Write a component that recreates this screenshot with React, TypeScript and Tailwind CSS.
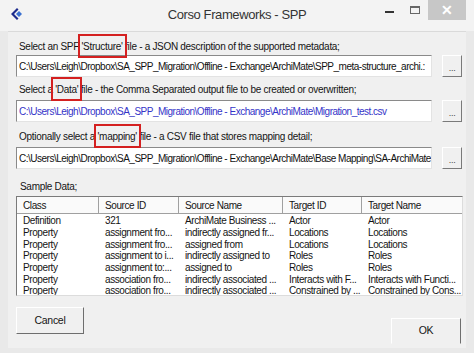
import React from 'react';

const rows = [
    ['Definition', '321', 'ArchiMate Business ...', 'Actor', 'Actor'],
    ['Property', 'assignment fro...', 'indirectly assigned fr...', 'Locations', 'Locations'],
    ['Property', 'assignment fro...', 'assigned from', 'Locations', 'Locations'],
    ['Property', 'assignment to i...', 'indirectly assigned to', 'Roles', 'Roles'],
    ['Property', 'assignment to:...', 'assigned to', 'Roles', 'Roles'],
    ['Property', 'association fro...', 'indirectly associated ...', 'Interacts with F...', 'Interacts with Functi...'],
    ['Property', 'association fro...', 'indirectly associated ...', 'Constrained by ...', 'Constrained by Cons...'],
];

const cols = ['Class', 'Source ID', 'Source Name', 'Target ID', 'Target Name'];
const widths = ['w-[82px]', 'w-[80px]', 'w-[104px]', 'w-[79px]', 'w-[101px]'];

function Marked({ children }: { children: React.ReactNode }) {
    return (
        <span className="relative inline-block">
            <span className="absolute -left-[4px] -right-[4px] -top-[5px] -bottom-[4px] border-2 border-[#d42020]" />
            {children}
        </span>
    );
}

function PathField({ value, blue }: { value: string; blue?: boolean }) {
    return (
        <div className="flex items-center gap-[10px]">
            <div className={`w-[421px] h-[22px] bg-white border border-t-[#8a8a8a] border-l-[#8a8a8a] border-r-[#e3e3e3] border-b-[#e3e3e3] flex items-center pl-[2px] overflow-hidden whitespace-nowrap tracking-[-0.5px] ${blue ? 'text-[#3434c8]' : 'text-[#111]'}`}>
                {value}
            </div>
            <div className="w-[20px] h-[22px] bg-[#f0f0f0] border border-t-white border-l-white border-r-[#7a7a7a] border-b-[#7a7a7a] text-[9px] leading-none text-[#444] pb-[3px] flex items-end justify-center">
                ...
            </div>
        </div>
    );
}

export default function App() {
    return (
        <div className="w-[474px] h-[353px] bg-[#e9e9e9] overflow-hidden flex flex-col text-[10px] tracking-[-0.3px] text-[#141414]" style={{ fontFamily: '"Liberation Sans", Arial, sans-serif' }}>
            {/* title bar */}
            <div className="h-[31px] relative flex items-center justify-center bg-[#f3f3f3]">
                <svg className="absolute left-[10px] top-[7px]" width="14" height="14" viewBox="0 0 14 14">
                    <path d="M7 1 L1 7 L7 13 L8.5 11.5 L4 7 L8.5 2.5 Z" fill="#1c2a8c" />
                    <path d="M6 7 L9 4 L12 7 L9 10 Z" fill="#3a70d0" />
                </svg>
                <span className="text-[13px] tracking-[-0.4px] text-[#333] pb-[2px]">Corso Frameworks - SPP</span>
                <div className="absolute right-[8px] top-0 flex items-start">
                    <div className="w-[26px] h-[20px] flex items-center justify-center">
                        <div className="w-[9px] h-[2px] bg-[#333] mt-[4px]" />
                    </div>
                    <div className="w-[26px] h-[20px] flex items-center justify-center">
                        <div className="w-[10px] h-[8px] border border-[#666] border-t-2" />
                    </div>
                    <div className="w-[38px] h-[20px] bg-[#c7c7c7] flex items-center justify-center text-white text-[14px] font-bold tracking-normal">
                        ✕
                    </div>
                </div>
            </div>

            {/* client area */}
            <div className="flex-1 mx-[8px] mb-[5px] bg-[#f0f0f0] border-t border-[#dadada] pl-[8px] pr-[4px] flex flex-col">
                <div className="mt-[6px] pl-[3px] h-[16px] flex items-center">
                    <span>Select an SPF <Marked>'Structure'</Marked> file - a JSON description of the supported metadata;</span>
                </div>
                <div className="mt-[1px]">
                    <PathField value="C:\Users\Leigh\Dropbox\SA_SPP_Migration\Offline - Exchange\ArchiMate\SPP_meta-structure_archi.:" />
                </div>
                <div className="mt-[4px] pl-[3px] h-[16px] flex items-center">
                    <span>Select a <Marked>'Data'</Marked> file - the Comma Separated output file to be created or overwritten;</span>
                </div>
                <div className="mt-[3px]">
                    <PathField blue value="C:\Users\Leigh\Dropbox\SA_SPP_Migration\Offline - Exchange\ArchiMate\Migration_test.csv" />
                </div>
                <div className="mt-[6px] pl-[3px] h-[16px] flex items-center">
                    <span>Optionally select a <Marked>'mapping'</Marked> file - a CSV file that stores mapping detail;</span>
                </div>
                <div className="mt-[3px]">
                    <PathField value="C:\Users\Leigh\Dropbox\SA_SPP_Migration\Offline - Exchange\ArchiMate\Base Mapping\SA-ArchiMate" />
                </div>

                <div className="mt-[10px] pl-[4px] h-[14px] flex items-center">Sample Data;</div>

                {/* table */}
                <div className="mt-[3px] w-[447px] h-[100px] bg-white border border-t-[#7a7a7a] border-l-[#7a7a7a] border-r-[#dcdcdc] border-b-[#dcdcdc] overflow-hidden tracking-[-0.4px]">
                    <div className="flex h-[17px]">
                        {cols.map((c, i) => (
                            <div key={c} className={`${widths[i]} shrink-0 h-full border-r border-b border-[#a0a0a0] flex items-center pl-[6px] bg-[#fafafa]`}>
                                {c}
                            </div>
                        ))}
                    </div>
                    <div className="pt-[1px]">
                        {rows.map((r, ri) => (
                            <div key={ri} className="flex h-[11.7px] items-center">
                                {r.map((cell, ci) => (
                                    <div key={ci} className={`${widths[ci]} shrink-0 pl-[6px] whitespace-nowrap overflow-hidden`}>
                                        {cell}
                                    </div>
                                ))}
                            </div>
                        ))}
                    </div>
                </div>

                <div className="flex justify-between items-start mt-[11px] pr-[1px]">
                    <button className="w-[68px] h-[27px] bg-[#f0f0f0] border border-t-white border-l-white border-r-[#6e6e6e] border-b-[#6e6e6e] text-[10.5px]">
                        Cancel
                    </button>
                    <button className="w-[70px] h-[26px] mt-[11px] bg-[#f0f0f0] border border-t-white border-l-white border-r-[#6e6e6e] border-b-transparent text-[10.5px]">
                        OK
                    </button>
                </div>
            </div>
        </div>
    );
}
